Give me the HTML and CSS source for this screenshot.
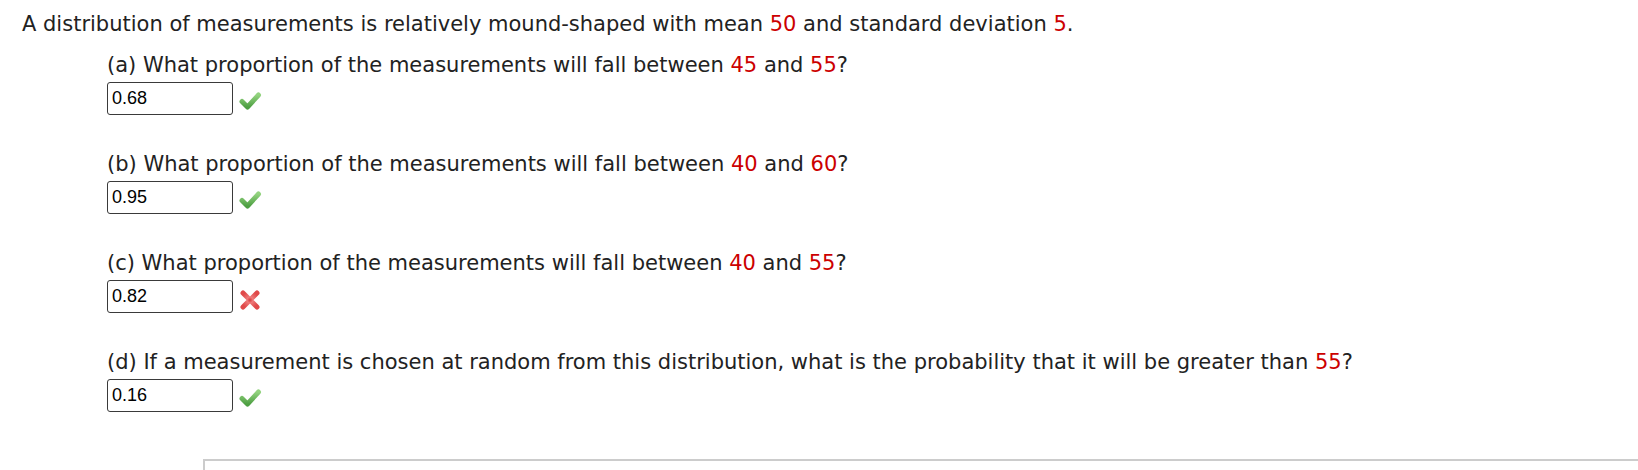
FILE: index.html
```html
<!DOCTYPE html>
<html lang="en">
<head>
<meta charset="utf-8">
<title>Distribution question</title>
<link rel="stylesheet" href="styles.css">
</head>
<body>
<div class="problem">
  <p class="stem">A distribution of measurements is relatively mound-shaped with mean <span class="num">50</span> and standard deviation <span class="num">5</span>.</p>
  <div class="parts">
    <div class="part">
      <p class="question">(a) What proportion of the measurements will fall between <span class="num">45</span> and <span class="num">55</span>?</p>
      <div class="answer">
        <input class="field" type="text" value="0.68" readonly>
        <svg class="mark" viewBox="0 0 24 20" width="24" height="20"><defs><linearGradient id="g1" x1="0" y1="0" x2="0" y2="1"><stop offset="0" stop-color="#93d37f"/><stop offset="1" stop-color="#4e9f43"/></linearGradient></defs><polyline points="4,10.5 9.5,16 20.5,4" fill="none" stroke="url(#g1)" stroke-width="5" stroke-linejoin="round" stroke-linecap="round"/></svg>
      </div>
    </div>
    <div class="part">
      <p class="question">(b) What proportion of the measurements will fall between <span class="num">40</span> and <span class="num">60</span>?</p>
      <div class="answer">
        <input class="field" type="text" value="0.95" readonly>
        <svg class="mark" viewBox="0 0 24 20" width="24" height="20"><defs><linearGradient id="g2" x1="0" y1="0" x2="0" y2="1"><stop offset="0" stop-color="#93d37f"/><stop offset="1" stop-color="#4e9f43"/></linearGradient></defs><polyline points="4,10.5 9.5,16 20.5,4" fill="none" stroke="url(#g2)" stroke-width="5" stroke-linejoin="round" stroke-linecap="round"/></svg>
      </div>
    </div>
    <div class="part">
      <p class="question">(c) What proportion of the measurements will fall between <span class="num">40</span> and <span class="num">55</span>?</p>
      <div class="answer">
        <input class="field" type="text" value="0.82" readonly>
        <svg class="mark cross" viewBox="0 0 24 24" width="24" height="24"><defs><radialGradient id="r1" cx="0.5" cy="0.5" r="0.6"><stop offset="0" stop-color="#d93a3a"/><stop offset="0.35" stop-color="#ee7a7a"/><stop offset="1" stop-color="#e04a4a"/></radialGradient></defs><path d="M5 5 L19 19 M19 5 L5 19" fill="none" stroke="url(#r1)" stroke-width="5" stroke-linecap="round"/></svg>
      </div>
    </div>
    <div class="part">
      <p class="question">(d) If a measurement is chosen at random from this distribution, what is the probability that it will be greater than <span class="num">55</span>?</p>
      <div class="answer">
        <input class="field" type="text" value="0.16" readonly>
        <svg class="mark" viewBox="0 0 24 20" width="24" height="20"><defs><linearGradient id="g3" x1="0" y1="0" x2="0" y2="1"><stop offset="0" stop-color="#93d37f"/><stop offset="1" stop-color="#4e9f43"/></linearGradient></defs><polyline points="4,10.5 9.5,16 20.5,4" fill="none" stroke="url(#g3)" stroke-width="5" stroke-linejoin="round" stroke-linecap="round"/></svg>
      </div>
    </div>
  </div>
  <div class="next-box"></div>
</div>
</body>
</html>
```
FILE: styles.css
```css
html, body {
  margin: 0;
  padding: 0;
  background: #ffffff;
}
body {
  font-family: "DejaVu Sans", Verdana, sans-serif;
  font-size: 21px;
  color: #222222;
  overflow: hidden;
}
.problem {
  padding: 9px 0 0 22px;
}
.stem {
  margin: 0;
  line-height: 30px;
  white-space: nowrap;
}
.num {
  color: #cc0000;
}
.parts {
  margin-left: 85px;
  margin-top: 11px;
  display: flex;
  flex-direction: column;
  gap: 34px;
}
.question {
  margin: 0;
  line-height: 30px;
  white-space: nowrap;
}
.answer {
  display: flex;
  align-items: center;
  gap: 5px;
  margin-top: 2px;
}
.field {
  box-sizing: border-box;
  width: 126px;
  height: 33px;
  margin: 0;
  padding: 0 4px;
  border: 1px solid #3a3a3a;
  border-radius: 3px;
  font-family: "Liberation Sans", Arial, sans-serif;
  font-size: 18px;
  color: #000000;
  background: #ffffff;
  outline: none;
}
.mark {
  display: block;
  margin-top: 4px;
}
.cross {
  margin-top: 6px;
}
.next-box {
  margin-left: 181px;
  margin-top: 47px;
  height: 10px;
  border-top: 2px solid #cccccc;
  border-left: 2px solid #cccccc;
}
```
